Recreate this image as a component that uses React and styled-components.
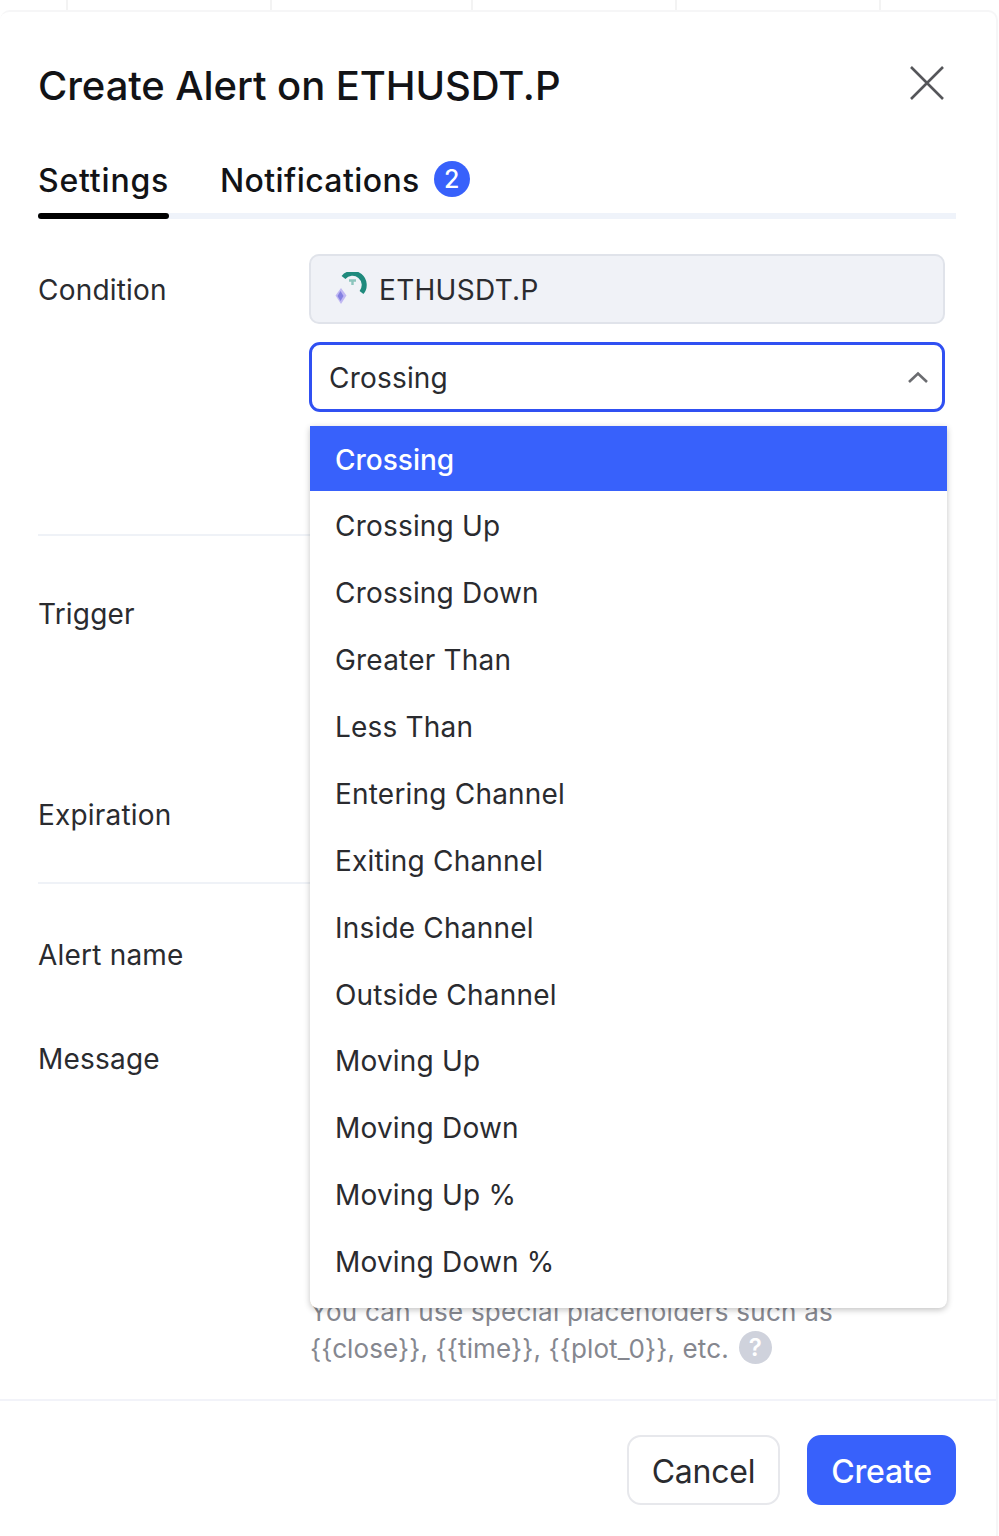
import React, { useState } from 'react';
import styled, { createGlobalStyle, ThemeProvider } from 'styled-components';

const theme = {
  primary: '#3861fb',
  outline: '#3050f2',
  text: '#2a2b2f',
  title: '#121316',
  muted: '#85878f',
  line: '#eff2f7',
  tabLine: '#eff3fa',
  field: '#f0f2f7',
  fieldBorder: '#e0e3ea',
  help: '#cfd2dc'
};

const GlobalStyle = createGlobalStyle`
  * {
    box-sizing: border-box;
  }

  body {
    margin: 0;
    background-color: #fff;
    font-family: Inter, 'Liberation Sans', sans-serif;
    overflow: hidden;
  }
`;

const StyledPage = styled.div`
  width: 999px;
  height: 1536px;
  display: flex;
  flex-direction: column;
  background-color: #fff;
`;

const StyledChart = styled.div`
  height: 12px;
  flex: none;
  display: grid;
  grid-template-columns: 68px 204px 201px 204px 204px;
`;

const StyledChartCell = styled.div`
  border-right: 2px solid #f3f3f3;
`;

const StyledDialog = styled.div`
  width: 998px;
  flex: 1;
  display: flex;
  flex-direction: column;
  border: 2px solid #f6f6f7;
  border-left: none;
  border-bottom: none;
  border-radius: 10px 10px 0 0;
  margin-top: -2px;
  background-color: #fff;
`;

const StyledHeader = styled.header`
  display: flex;
  justify-content: space-between;
  align-items: flex-start;
  height: 96px;
  padding: 50px 50px 0 38px;
`;

const StyledTitle = styled.h2`
  margin: 0;
  font-size: 40px;
  line-height: 48px;
  font-weight: 500;
  letter-spacing: -0.1px;
  white-space: nowrap;
  color: ${({ theme }) => theme.title};
`;

const StyledClose = styled.button`
  display: flex;
  padding: 2px 0 0;
  border: none;
  background-color: transparent;
  color: #55565a;
`;

const StyledTabs = styled.nav`
  display: flex;
  gap: 51px;
  height: 111px;
  margin: 0 40px 0 38px;
  align-items: flex-end;
  background: linear-gradient(${({ theme }) => theme.tabLine}, ${({ theme }) => theme.tabLine}) bottom / 100% 6px no-repeat;
`;

const StyledTab = styled.button`
  display: flex;
  align-items: center;
  gap: 14px;
  height: 58px;
  padding: 0 0 20px;
  border: none;
  background-color: transparent;
  font-family: inherit;
  font-size: 32px;
  font-weight: 450;
  letter-spacing: 0.4px;
  color: ${({ theme }) => theme.title};
  position: relative;

  &:first-child {
    width: 131px;
    letter-spacing: 0.8px;
  }

  &::after {
    content: '';
    display: ${({ $active }) => ($active ? 'block' : 'none')};
    position: absolute;
    left: 0;
    right: 0;
    bottom: 0;
    height: 6px;
    border-radius: 3px;
    background-color: #000;
  }
`;

const StyledBadge = styled.span`
  width: 36px;
  height: 36px;
  display: flex;
  align-items: center;
  justify-content: center;
  margin-bottom: 2px;
  border-radius: 50%;
  background-color: ${({ theme }) => theme.primary};
  color: #fff;
  font-size: 25px;
  font-weight: 500;
  letter-spacing: 0;
`;

const StyledBody = styled.div`
  display: flex;
  flex-direction: column;
  padding: 35px 51px 0 38px;
  height: 1180px;
`;

const StyledRow = styled.div`
  display: grid;
  grid-template-columns: 271px 1fr;
  height: ${({ $height }) => $height}px;
`;

const StyledLabel = styled.div`
  font-size: 28px;
  line-height: 34px;
  padding-top: ${({ $offset }) => $offset || 0}px;
  letter-spacing: 0.2px;
  color: ${({ theme }) => theme.text};
`;

const StyledControls = styled.div`
  display: flex;
  flex-direction: column;
  gap: 18px;
`;

const StyledSymbol = styled.div`
  display: flex;
  align-items: center;
  gap: 12px;
  height: 70px;
  padding: 1px 24px 0;
  border: 2px solid ${({ theme }) => theme.fieldBorder};
  border-radius: 10px;
  background-color: ${({ theme }) => theme.field};
  font-size: 28px;
  letter-spacing: 0.3px;
  color: ${({ theme }) => theme.text};
`;

const StyledSelect = styled.div`
  position: relative;
  height: 70px;
`;

const StyledSelectButton = styled.button`
  display: flex;
  width: 100%;
  height: 70px;
  align-items: center;
  justify-content: space-between;
  padding: 1px 13px 0 17px;
  border: 3px solid ${({ theme }) => theme.outline};
  border-radius: 11px;
  background-color: #fff;
  font-family: inherit;
  font-size: 28px;
  letter-spacing: 0.2px;
  color: ${({ theme }) => theme.text};
`;

const StyledMenu = styled.ul`
  position: absolute;
  top: 84px;
  left: 1px;
  width: 637px;
  height: 882px;
  margin: 0;
  padding: 0;
  list-style: none;
  border-radius: 0 0 8px 8px;
  background-color: #fff;
  box-shadow: 0 2px 6px rgba(0, 0, 0, 0.24);
  z-index: 1;
`;

const StyledOption = styled.li`
  display: flex;
  align-items: center;
  height: 66.9px;
  padding: 0 25px;
  font-size: 28px;
  letter-spacing: 0.2px;
  color: ${({ theme }) => theme.text};
  ${({ theme, $selected }) =>
    $selected &&
    `
    height: 65px;
    margin-bottom: 1.9px;
    padding-top: 2px;
    color: #fff;
    font-weight: 500;
    letter-spacing: 0;
    background-color: ${theme.primary};
  `}
`;

const StyledDivider = styled.hr`
  flex: none;
  width: 100%;
  height: 2px;
  margin: 0;
  border: none;
  background-color: ${({ theme }) => theme.line};
`;

const StyledHint = styled.p`
  display: flex;
  flex-wrap: wrap;
  align-items: center;
  align-content: flex-start;
  margin: 0 0 0 1px;
  padding-top: 305px;
  font-size: 26px;
  line-height: 37px;
  white-space: nowrap;
  color: ${({ theme }) => theme.muted};
`;

const StyledHintLine = styled.span`
  flex: ${({ $full }) => ($full ? '0 0 100%' : 'none')};
  letter-spacing: ${({ $full }) => ($full ? 0.25 : 0.13)}px;
`;

const StyledHelp = styled.span`
  display: flex;
  align-items: center;
  justify-content: center;
  width: 33px;
  height: 33px;
  margin: 0 0 2px 10px;
  border-radius: 50%;
  background-color: ${({ theme }) => theme.help};
  color: #fff;
  font-size: 24px;
  font-weight: 600;
`;

const StyledFooter = styled.footer`
  display: flex;
  justify-content: flex-end;
  gap: 27px;
  padding: 34px 40px 0 0;
  flex: 1;
  border-top: 2px solid #f2f3f9;
`;

const StyledButton = styled.button`
  width: ${({ $primary }) => ($primary ? 149 : 153)}px;
  height: 70px;
  padding: 2px 0 0;
  border: 2px solid ${({ theme, $primary }) => ($primary ? theme.primary : '#e7e8ec')};
  border-radius: 14px;
  background-color: ${({ theme, $primary }) => ($primary ? theme.primary : '#fff')};
  color: ${({ theme, $primary }) => ($primary ? '#fff' : theme.text)};
  font-family: inherit;
  font-size: 32px;
  font-weight: ${({ $primary }) => ($primary ? 500 : 400)};
  letter-spacing: -0.2px;
`;

const CloseIcon = () => (
  <svg width='38' height='38' viewBox='0 0 38 38' fill='none'>
    <path d='M3 3L35 35M35 3L3 35' stroke='currentColor' strokeWidth='2.6' />
  </svg>
);

const ChevronIcon = () => (
  <svg width='22' height='14' viewBox='0 0 22 14' fill='none'>
    <path d='M2 11L11 2.5L20 11' stroke='#6b6c70' strokeWidth='2.6' />
  </svg>
);

const PairIcon = () => (
  <svg width='32' height='36' viewBox='0 0 32 36' fill='none'>
    <path d='M8.5 5.5A11.2 11.2 0 0 1 26.5 20.5' stroke='#1f8a7d' strokeWidth='5' />
    <path d='M14 8.5H21M17.5 8.5V13' stroke='#8cc5bd' strokeWidth='2.4' />
    <path d='M6 16L11.5 23.5L6 32L0.5 23.5Z' fill='#c0b8f2' />
    <path d='M5.5 19L8.5 24L5.5 29L2.5 24Z' fill='#8480e2' />
  </svg>
);

const options = [
  'Crossing',
  'Crossing Up',
  'Crossing Down',
  'Greater Than',
  'Less Than',
  'Entering Channel',
  'Exiting Channel',
  'Inside Channel',
  'Outside Channel',
  'Moving Up',
  'Moving Down',
  'Moving Up %',
  'Moving Down %'
];

const ConditionSelect = () => {
  const [open, setOpen] = useState(true);
  const [selected, setSelected] = useState('Crossing');

  return (
    <StyledSelect>
      <StyledSelectButton type='button' onClick={() => setOpen(!open)}>
        {selected}
        <ChevronIcon />
      </StyledSelectButton>
      {open && (
        <StyledMenu>
          {options.map(option => (
            <StyledOption
              key={option}
              $selected={option === selected}
              onClick={() => {
                setSelected(option);
                setOpen(false);
              }}
            >
              {option}
            </StyledOption>
          ))}
        </StyledMenu>
      )}
    </StyledSelect>
  );
};

const App = () => {
  const [tab, setTab] = useState('settings');

  return (
    <ThemeProvider theme={theme}>
      <GlobalStyle />
      <StyledPage>
        <StyledChart>
          <StyledChartCell />
          <StyledChartCell />
          <StyledChartCell />
          <StyledChartCell />
          <StyledChartCell />
        </StyledChart>
        <StyledDialog>
          <StyledHeader>
            <StyledTitle>Create Alert on ETHUSDT.P</StyledTitle>
            <StyledClose type='button' aria-label='Close'>
              <CloseIcon />
            </StyledClose>
          </StyledHeader>
          <StyledTabs>
            <StyledTab $active={tab === 'settings'} onClick={() => setTab('settings')}>
              Settings
            </StyledTab>
            <StyledTab
              $active={tab === 'notifications'}
              onClick={() => setTab('notifications')}
            >
              Notifications
              <StyledBadge>2</StyledBadge>
            </StyledTab>
          </StyledTabs>
          <StyledBody>
            <StyledRow $height={280}>
              <StyledLabel $offset={19}>Condition</StyledLabel>
              <StyledControls>
                <StyledSymbol>
                  <PairIcon />
                  ETHUSDT.P
                </StyledSymbol>
                <ConditionSelect />
              </StyledControls>
            </StyledRow>
            <StyledDivider />
            <StyledRow $height={201}>
              <StyledLabel $offset={61}>Trigger</StyledLabel>
            </StyledRow>
            <StyledRow $height={145}>
              <StyledLabel $offset={61}>Expiration</StyledLabel>
            </StyledRow>
            <StyledDivider />
            <StyledRow $height={104}>
              <StyledLabel $offset={54}>Alert name</StyledLabel>
            </StyledRow>
            <StyledRow $height={380}>
              <StyledLabel $offset={54}>Message</StyledLabel>
              <StyledHint>
                <StyledHintLine $full>You can use special placeholders such as</StyledHintLine>
                <StyledHintLine>{'{{close}}, {{time}}, {{plot_0}}, etc.'}</StyledHintLine>
                <StyledHelp>?</StyledHelp>
              </StyledHint>
            </StyledRow>
          </StyledBody>
          <StyledFooter>
            <StyledButton type='button'>Cancel</StyledButton>
            <StyledButton type='button' $primary>
              Create
            </StyledButton>
          </StyledFooter>
        </StyledDialog>
      </StyledPage>
    </ThemeProvider>
  );
};

export default App;
